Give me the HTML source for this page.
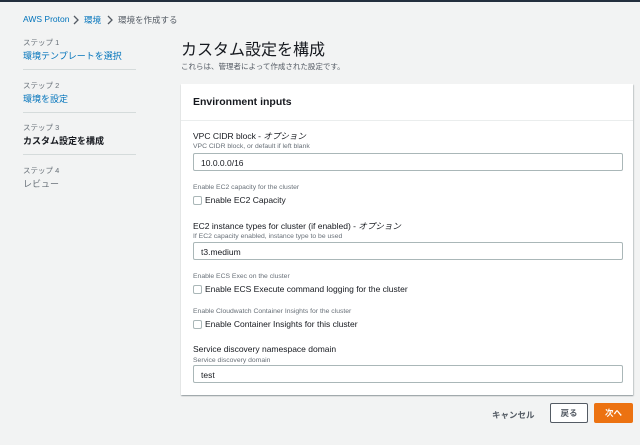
<!DOCTYPE html>
<html><head><meta charset="utf-8"><style>
*{box-sizing:border-box;margin:0;padding:0}
body{width:640px;height:445px;background:#f2f3f3;font-family:"Liberation Sans","Noto Sans CJK JP",sans-serif;color:#16191f;position:relative;overflow:hidden}
.a{position:absolute;white-space:nowrap}
.top{left:0;top:0;width:640px;height:2px;background:#232f3e}
.bc{top:14px;font-size:8.5px;color:#0073bb}
.sl{font-size:7.5px;color:#687078}
.sv{font-size:9px;color:#0073bb}
.hr{left:23px;width:113px;height:1px;background:#d5dbdb}
.panel{left:181px;top:84px;width:452px;height:311px;background:#fff;box-shadow:0 1px 1px rgba(0,28,36,.3),1px 1px 1px rgba(0,28,36,.15)}
.lab{font-size:8.5px;left:193px}
.desc{font-size:6.8px;color:#687078;left:193px}
.inp{left:193px;width:430px;height:18px;border:1px solid #aab7b8;border-radius:2px;font-size:8.5px;padding:4px 7px}
.cb{left:193px;width:9px;height:9px;border:1px solid #aab7b8;border-radius:2px}
.cbl{left:205px;font-size:8.5px}
i{font-style:italic}
</style></head><body>
<div class="a top"></div>
<div class="a bc" style="left:23px">AWS Proton</div>
<svg class="a" style="left:73px;top:15px" width="6" height="10" viewBox="0 0 6 10"><path d="M1 1l4 4-4 4" fill="none" stroke="#545b64" stroke-width="1.3"/></svg>
<div class="a bc" style="left:84px">環境</div>
<svg class="a" style="left:107px;top:15px" width="6" height="10" viewBox="0 0 6 10"><path d="M1 1l4 4-4 4" fill="none" stroke="#545b64" stroke-width="1.3"/></svg>
<div class="a bc" style="left:118px;color:#545b64">環境を作成する</div>
<div class="a sl" style="left:23px;top:37px">ステップ 1</div>
<div class="a sv" style="left:23px;top:49px">環境テンプレートを選択</div>
<div class="a hr" style="top:69px"></div>
<div class="a sl" style="left:23px;top:80px">ステップ 2</div>
<div class="a sv" style="left:23px;top:92px">環境を設定</div>
<div class="a hr" style="top:112px"></div>
<div class="a sl" style="left:23px;top:122px">ステップ 3</div>
<div class="a sv" style="left:23px;top:134px;color:#16191f;font-weight:bold">カスタム設定を構成</div>
<div class="a hr" style="top:154px"></div>
<div class="a sl" style="left:23px;top:165px">ステップ 4</div>
<div class="a sv" style="left:23px;top:177px;color:#687078">レビュー</div>
<div class="a" style="left:181px;top:36px;font-size:16px">カスタム設定を構成</div>
<div class="a" style="left:181px;top:61px;font-size:7.5px;color:#545b64">これらは、管理者によって作成された設定です。</div>
<div class="a panel"></div>
<div class="a" style="left:181px;top:120px;width:452px;height:1px;background:#eaeded"></div>
<div class="a" style="left:193px;top:96px;font-size:10.5px;font-weight:bold">Environment inputs</div>
<div class="a lab" style="top:130px">VPC CIDR block - <i>オプション</i></div>
<div class="a desc" style="top:143px">VPC CIDR block, or default if left blank</div>
<div class="a inp" style="top:153px">10.0.0.0/16</div>
<div class="a desc" style="top:184px">Enable EC2 capacity for the cluster</div>
<div class="a cb" style="top:196px"></div><div class="a cbl" style="top:195px">Enable EC2 Capacity</div>
<div class="a lab" style="top:220px">EC2 instance types for cluster (if enabled) - <i>オプション</i></div>
<div class="a desc" style="top:233px">If EC2 capacity enabled, instance type to be used</div>
<div class="a inp" style="top:242px">t3.medium</div>
<div class="a desc" style="top:273px">Enable ECS Exec on the cluster</div>
<div class="a cb" style="top:285px"></div><div class="a cbl" style="top:284px">Enable ECS Execute command logging for the cluster</div>
<div class="a desc" style="top:308px">Enable Cloudwatch Container Insights for the cluster</div>
<div class="a cb" style="top:320px"></div><div class="a cbl" style="top:319px">Enable Container Insights for this cluster</div>
<div class="a lab" style="top:344px">Service discovery namespace domain</div>
<div class="a desc" style="top:357px">Service discovery domain</div>
<div class="a inp" style="top:365px">test</div>
<div class="a" style="left:492px;top:409px;font-size:8.5px;font-weight:bold;color:#545b64">キャンセル</div>
<div class="a" style="left:550px;top:403px;width:38px;height:20px;border:1px solid #545b64;border-radius:2px;background:#fff;font-size:8.5px;font-weight:bold;color:#545b64;text-align:center;line-height:18px">戻る</div>
<div class="a" style="left:594px;top:403px;width:39px;height:20px;background:#ec7211;border-radius:2px;font-size:8.5px;font-weight:bold;color:#fff;text-align:center;line-height:20px">次へ</div>
</body></html>
